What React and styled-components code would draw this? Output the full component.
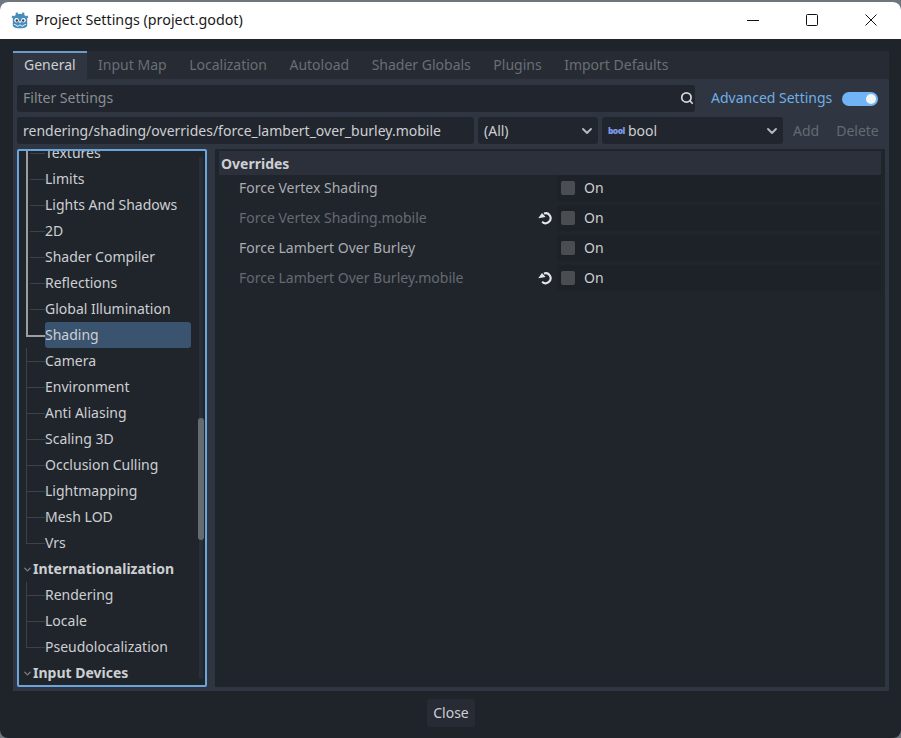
import styled, { createGlobalStyle } from 'styled-components';
import { ChevronDown, Search } from 'lucide-react';

const GlobalStyle = createGlobalStyle`
  html,
  body {
    margin: 0;
    background: #6f767e;
  }
  * {
    box-sizing: border-box;
  }
`;

const Window = styled.div`
  width: 901px;
  height: 736px;
  margin-top: 2px;
  display: flex;
  flex-direction: column;
  border-radius: 8px;
  overflow: hidden;
  background: #1f242a;
  color: #cdcfd2;
  font-family: 'Noto Sans', sans-serif;
  font-size: 14px;
  line-height: 20px;
`;

const TitleBar = styled.div`
  height: 37px;
  flex: none;
  display: flex;
  align-items: center;
  padding: 0 1px 2px 11px;
  background: #fff;
  color: #1a1a1a;
  font-size: 14.3px;
`;

const AppTitle = styled.span`
  margin-left: 6px;
  flex: 1;
`;

const WindowButton = styled.div`
  width: 59px;
  height: 35px;
  display: flex;
  align-items: center;
  justify-content: center;
`;

const Body = styled.div`
  flex: 1;
  display: flex;
  flex-direction: column;
  padding: 12px 12px 0 13px;
`;

const TabBar = styled.div`
  height: 28px;
  flex: none;
  display: flex;
  gap: 0.5px;
  background: #262b34;
`;

const Tab = styled.div`
  padding: 0 11px 2px;
  display: flex;
  align-items: center;
  color: ${(props) => (props.$active ? '#cdcfd2' : '#6a6e75')};
  background: ${(props) => (props.$active ? '#2f3641' : 'transparent')};
  border-top: 2px solid ${(props) => (props.$active ? '#6a9dc9' : 'transparent')};
`;

const Panel = styled.div`
  height: 612px;
  flex: none;
  display: flex;
  flex-direction: column;
  gap: 5px;
  padding: 6px 4px 4px;
  background: #2f3641;
`;

const Toolbar = styled.div`
  height: 27px;
  flex: none;
  display: flex;
  align-items: center;
`;

const Field = styled.div`
  width: ${(props) => props.$width}px;
  height: 27px;
  flex: none;
  display: flex;
  align-items: center;
  margin-right: ${(props) => props.$gap || 0}px;
  padding: ${(props) => (props.$lift ? '0 6px 2px' : '0 6px')};
  border-radius: 3px;
  background: #21262e;
  color: ${(props) => (props.$dim ? '#8a8d92' : '#cdcfd2')};
`;

const FieldText = styled.span`
  flex: 1;
  white-space: nowrap;
`;

const FilterIcon = styled(Search)`
  margin-right: -5px;
  color: #d4d5d7;
`;

const SelectArrow = styled(ChevronDown)`
  margin-right: -3px;
  color: #b6b9bd;
`;

const AdvancedLabel = styled.span`
  margin: 0 0 2px 16px;
  color: #70aee6;
`;

const Switch = styled.div`
  width: 36px;
  height: 14px;
  margin-left: 10px;
  position: relative;
  border-radius: 7px;
  background: #70b4f5;
  &::after {
    content: '';
    position: absolute;
    right: 2px;
    top: 2px;
    width: 10px;
    height: 10px;
    border-radius: 50%;
    background: #f2f4f6;
  }
`;

const TypeBadge = styled.span`
  width: 16px;
  margin-right: 4px;
  white-space: nowrap;
  color: #7f9bea;
  font-size: 8.5px;
  font-weight: 900;
  letter-spacing: -0.6px;
`;

const ActionButton = styled.span`
  color: #656a72;
  margin-left: ${(props) => props.$gap}px;
`;

const Split = styled.div`
  flex: 1;
  min-height: 0;
  display: flex;
  gap: 8px;
`;

const Tree = styled.div`
  width: 190px;
  flex: none;
  position: relative;
  overflow: hidden;
  border: 2px solid #6aa5dc;
  border-radius: 2px;
  background: #20252c;
`;

const TreeList = styled.div`
  margin-top: -11px;
`;

const TreeRow = styled.div`
  height: 26px;
  margin-right: 14px;
  margin-left: 26px;
  padding-top: 3px;
  position: relative;
  border-radius: 3px;
  background: ${(props) => (props.$active ? '#3a536e' : 'transparent')};
  &::before {
    content: '';
    position: absolute;
    left: -19px;
    top: 0;
    width: ${(props) => (props.$bright ? 2 : 1)}px;
    height: ${(props) => (props.$end || props.$active ? 13 : 26)}px;
    background: ${(props) => (props.$bright ? '#9c9ea2' : '#3d4248')};
  }
  &::after {
    content: '';
    position: absolute;
    left: ${(props) => (props.$active || !props.$bright ? '-19px' : '-15px')};
    right: 100%;
    top: 13px;
    height: ${(props) => (props.$active ? 2 : 1)}px;
    background: ${(props) => (props.$active ? '#9c9ea2' : '#3d4248')};
  }
`;

const SectionRow = styled.div`
  height: 26px;
  padding-left: 3px;
  display: flex;
  align-items: center;
  font-weight: 700;
  color: #cdcfd2;
`;

const SectionArrow = styled(ChevronDown)`
  width: 11px;
  color: #7b7f85;
`;

const ScrollTrack = styled.div`
  position: absolute;
  right: 2px;
  top: 6px;
  bottom: 6px;
  width: 4px;
  border-radius: 2px;
  background: #2a2f37;
`;

const ScrollThumb = styled.div`
  position: absolute;
  left: -1px;
  top: 261px;
  width: 6px;
  height: 122px;
  border-radius: 3px;
  background: #666b72;
`;

const Inspector = styled.div`
  flex: 1;
  padding: 2px 4px;
  background: #20252c;
`;

const InspectorHeader = styled.div`
  height: 24px;
  display: flex;
  align-items: center;
  padding: 2px 0 0 2px;
  font-weight: 700;
  background: #2b303a;
`;

const PropertyList = styled.div`
  display: flex;
  flex-direction: column;
  gap: 4px;
`;

const PropertyRow = styled.div`
  height: 26px;
  display: flex;
  align-items: center;
  padding-left: 20px;
`;

const PropertyName = styled.span`
  flex: 1;
  color: ${(props) => (props.$readonly ? '#666a71' : '#a9acb1')};
`;

const PropertyValue = styled.div`
  width: 324px;
  height: 26px;
  display: flex;
  align-items: center;
  padding-left: 4px;
  background: #1d2128;
`;

const Checkbox = styled.div`
  width: 14px;
  height: 14px;
  margin-right: 9px;
  border-radius: 2px;
  background: #4a4d52;
`;

const ResetIcon = styled.svg`
  width: 16px;
  height: 16px;
  margin-right: 3px;
`;

const Footer = styled.div`
  flex: 1;
  display: flex;
  justify-content: center;
  padding-top: 8px;
`;

const CloseButton = styled.div`
  width: 48px;
  height: 28px;
  display: flex;
  align-items: center;
  justify-content: center;
  border-radius: 3px;
  background: #262b34;
`;

const tabs = ['General', 'Input Map', 'Localization', 'Autoload', 'Shader Globals', 'Plugins', 'Import Defaults'];

const renderingRows = [
  'Textures',
  'Limits',
  'Lights And Shadows',
  '2D',
  'Shader Compiler',
  'Reflections',
  'Global Illumination',
  'Shading',
  'Camera',
  'Environment',
  'Anti Aliasing',
  'Scaling 3D',
  'Occlusion Culling',
  'Lightmapping',
  'Mesh LOD',
  'Vrs',
];

const i18nRows = ['Rendering', 'Locale', 'Pseudolocalization'];

const properties = [
  { name: 'Force Vertex Shading' },
  { name: 'Force Vertex Shading.mobile', readonly: true },
  { name: 'Force Lambert Over Burley' },
  { name: 'Force Lambert Over Burley.mobile', readonly: true },
];

const GodotLogo = () => (
  <svg width="18" height="18" viewBox="0 0 18 18">
    <path
      d="M6.5 1.2 7 3q2-.5 4 0l.5-1.8 2 .9-.4 1.700q1 .6 1.700 1.400l1.600-.8 1.100 1.800-1.300 1.100V15c-1 1.600-3 2.300-7.200 2.300S2.800 16.600 1.800 15V7.300L.5 6.200l1.100-1.800 1.600.8q.7-.8 1.700-1.400l-.4-1.700z"
      fill="#478cbf"
    />
    <circle cx="5.600" cy="9.300" r="2.300" fill="#fff" />
    <circle cx="12.400" cy="9.300" r="2.300" fill="#fff" />
    <circle cx="5.800" cy="9.500" r="1.200" fill="#414042" />
    <circle cx="12.200" cy="9.500" r="1.200" fill="#414042" />
    <rect x="8.300" y="10" width="1.400" height="2" rx=".6" fill="#fff" />
    <path d="M3 13.400l2.400.6.5 1.200h1.500l.5-1h2.200l.5 1h1.500l.5-1.200 2.400-.6" fill="none" stroke="#dfeaf3" strokeWidth="1" />
  </svg>
);

const Reset = () => (
  <ResetIcon viewBox="0 0 16 16">
    <path d="M6 3.400a5 5 0 1 1-1.900 8.400" fill="none" stroke="#e4e5e7" strokeWidth="2.100" />
    <path d="M0 7.600h7.400L4.400 3z" fill="#e4e5e7" transform="rotate(-8 4 6)" />
  </ResetIcon>
);

const App = () => {
  return (
    <>
      <GlobalStyle />
      <Window>
        <TitleBar>
          <GodotLogo />
          <AppTitle>Project Settings (project.godot)</AppTitle>
          <WindowButton>
            <svg width="12" height="12" viewBox="0 0 12 12">
              <path d="M0 6.500h12" stroke="#111" strokeWidth="1" />
            </svg>
          </WindowButton>
          <WindowButton>
            <svg width="12" height="12" viewBox="0 0 12 12">
              <rect x=".5" y=".5" width="11" height="11" rx="1" fill="none" stroke="#111" />
            </svg>
          </WindowButton>
          <WindowButton>
            <svg width="12" height="12" viewBox="0 0 12 12">
              <path d="M.5.500l11 11M11.500.500l-11 11" stroke="#111" strokeWidth="1" />
            </svg>
          </WindowButton>
        </TitleBar>
        <Body>
          <TabBar>
            {tabs.map((tab, index) => (
              <Tab key={tab} $active={index === 0}>
                {tab}
              </Tab>
            ))}
          </TabBar>
          <Panel>
            <Toolbar>
              <Field $width={678} $dim $lift>
                <FieldText>Filter Settings</FieldText>
                <FilterIcon size={14} strokeWidth={3} />
              </Field>
              <AdvancedLabel>Advanced Settings</AdvancedLabel>
              <Switch />
            </Toolbar>
            <Toolbar>
              <Field $width={457} $gap={4}>
                <FieldText>rendering/shading/overrides/force_lambert_over_burley.mobile</FieldText>
              </Field>
              <Field $width={120} $gap={4}>
                <FieldText>(All)</FieldText>
                <SelectArrow size={16} strokeWidth={2.8} />
              </Field>
              <Field $width={181}>
                <TypeBadge>bool</TypeBadge>
                <FieldText>bool</FieldText>
                <SelectArrow size={16} strokeWidth={2.8} />
              </Field>
              <ActionButton $gap={10}>Add</ActionButton>
              <ActionButton $gap={17}>Delete</ActionButton>
            </Toolbar>
            <Split>
              <Tree>
                <TreeList>
                  {renderingRows.map((row, index) => (
                    <TreeRow
                      key={row}
                      $active={row === 'Shading'}
                      $bright={index <= 7}
                      $end={index === renderingRows.length - 1}
                    >
                      {row}
                    </TreeRow>
                  ))}
                  <SectionRow>
                    <SectionArrow size={11} strokeWidth={3} />
                    Internationalization
                  </SectionRow>
                  {i18nRows.map((row, index) => (
                    <TreeRow key={row} $end={index === i18nRows.length - 1}>
                      {row}
                    </TreeRow>
                  ))}
                  <SectionRow>
                    <SectionArrow size={11} strokeWidth={3} />
                    Input Devices
                  </SectionRow>
                </TreeList>
                <ScrollTrack>
                  <ScrollThumb />
                </ScrollTrack>
              </Tree>
              <Inspector>
                <InspectorHeader>Overrides</InspectorHeader>
                <PropertyList>
                  {properties.map((property) => (
                    <PropertyRow key={property.name}>
                      <PropertyName $readonly={property.readonly}>{property.name}</PropertyName>
                      {property.readonly && <Reset />}
                      <PropertyValue>
                        <Checkbox />
                        On
                      </PropertyValue>
                    </PropertyRow>
                  ))}
                </PropertyList>
              </Inspector>
            </Split>
          </Panel>
          <Footer>
            <CloseButton>Close</CloseButton>
          </Footer>
        </Body>
      </Window>
    </>
  );
};

export default App;
